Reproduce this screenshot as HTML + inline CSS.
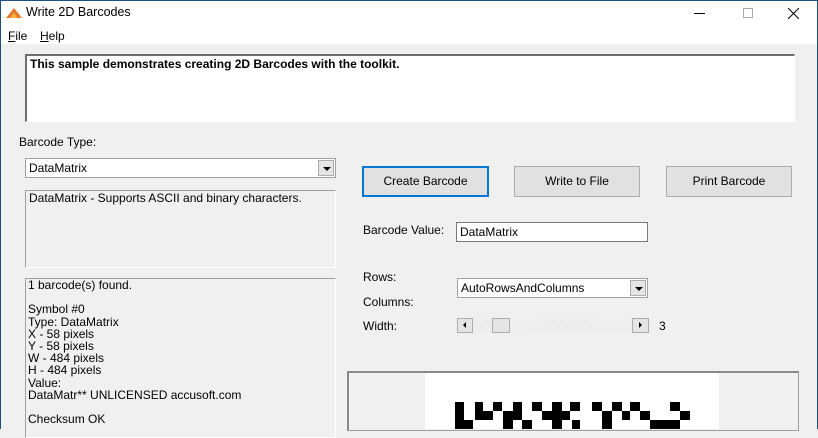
<!DOCTYPE html>
<html><head><style>
*{box-sizing:border-box;margin:0;padding:0}
body{width:818px;height:429px;overflow:hidden;background:#f0f0f0;font-family:"Liberation Sans",Arial,sans-serif;font-size:12px;color:#000;position:relative}
.a{position:absolute}
.win{left:0;top:0;width:818px;height:429px;border:1px solid #1c4f7c;border-bottom:none}
.title{left:1px;top:1px;width:816px;height:30px;background:#fff}
.menu{left:1px;top:30px;width:816px;height:14px;background:#fff}
.sunk{border-top:1px solid #a0a0a0;border-left:1px solid #a0a0a0;border-right:1px solid #fff;border-bottom:1px solid #fff}
.btn{background:#e1e1e1;border:1px solid #adadad;text-align:center;line-height:29px}
.combo{background:#fff;border:1px solid #a0a0a0;height:20px;line-height:18px;padding-left:3px}
.arr{position:absolute;right:1px;top:1px;width:16px;height:16px;background:#e5e5e5;border:1px solid #adadad}
.arr:after{content:"";position:absolute;left:4px;top:6px;border-left:4px solid transparent;border-right:4px solid transparent;border-top:4px solid #000}
.k{position:absolute;background:#000}
</style></head><body>
<div class="a win"></div>
<div class="a title"></div>
<svg class="a" style="left:6px;top:7px" width="16" height="12"><polygon points="0,11 8,1 16,11 11,11 8,6 4,11" fill="#e8782a"/><polygon points="4,11 8,6 11,11" fill="#f4b23a"/></svg>
<div class="a" style="left:26px;top:5px;font-size:12.5px">Write 2D Barcodes</div>
<div class="a" style="left:694px;top:13px;width:11px;height:1px;background:#000"></div>
<div class="a" style="left:743px;top:8px;width:10px;height:10px;border:1px solid #aaa"></div>
<svg class="a" style="left:788px;top:8px" width="11" height="11"><path d="M0 0L11 11M11 0L0 11" stroke="#000" stroke-width="1"/></svg>
<div class="a menu"></div>
<div class="a" style="left:8px;top:29px"><u>F</u>ile</div>
<div class="a" style="left:40px;top:29px"><u>H</u>elp</div>

<div class="a sunk" style="left:25px;top:54px;width:770px;height:68px;background:#fff;border-top:2px solid #6d6d6d;border-left:2px solid #6d6d6d"></div>
<div class="a" style="left:30px;top:57px;font-weight:bold">This sample demonstrates creating 2D Barcodes with the toolkit.</div>

<div class="a" style="left:19px;top:135px">Barcode Type:</div>
<div class="a combo" style="left:25px;top:158px;width:311px">DataMatrix<div class="arr"></div></div>

<div class="a sunk" style="left:25px;top:190px;width:311px;height:78px"></div>
<div class="a" style="left:29px;top:191px">DataMatrix - Supports ASCII and binary characters.</div>

<div class="a sunk" style="left:25px;top:278px;width:311px;height:160px"></div>
<div class="a" style="left:28px;top:279px;line-height:12.2px">1 barcode(s) found.<br><br>Symbol #0<br>Type: DataMatrix<br>X - 58 pixels<br>Y - 58 pixels<br>W - 484 pixels<br>H - 484 pixels<br>Value:<br>DataMatr** UNLICENSED accusoft.com<br><br>Checksum OK</div>

<div class="a btn" style="left:362px;top:166px;width:127px;height:31px;border:2px solid #0078d7;line-height:27px">Create Barcode</div>
<div class="a btn" style="left:514px;top:166px;width:126px;height:31px">Write to File</div>
<div class="a btn" style="left:666px;top:166px;width:126px;height:31px">Print Barcode</div>

<div class="a" style="left:363px;top:223px">Barcode Value:</div>
<div class="a combo" style="left:456px;top:222px;width:192px;border-color:#7a7a7a">DataMatrix</div>

<div class="a" style="left:363px;top:270px">Rows:</div>
<div class="a" style="left:363px;top:295px">Columns:</div>
<div class="a combo" style="left:457px;top:278px;width:191px">AutoRowsAndColumns<div class="arr"></div></div>
<div class="a" style="left:363px;top:319px">Width:</div>
<div class="a" style="left:457px;top:318px;width:192px;height:15px;background:repeating-linear-gradient(45deg,#e8e8e8 0 1px,#f4f4f4 1px 2px)"></div>
<div class="a" style="left:457px;top:318px;width:16px;height:15px;background:#e5e5e5;border:1px solid #adadad"></div>
<div class="a" style="left:463px;top:322px;border-top:3px solid transparent;border-bottom:3px solid transparent;border-right:3px solid #000"></div>
<div class="a" style="left:492px;top:318px;width:18px;height:15px;background:#e5e5e5;border:1px solid #adadad"></div>
<div class="a" style="left:632px;top:318px;width:17px;height:15px;background:#e5e5e5;border:1px solid #adadad"></div>
<div class="a" style="left:639px;top:322px;border-top:3px solid transparent;border-bottom:3px solid transparent;border-left:3px solid #000"></div>
<div class="a" style="left:659px;top:319px">3</div>

<div class="a" style="left:347px;top:371px;width:452px;height:60px;border:1px solid #a0a0a0;border-top:2px solid #8a8a8a;border-left:2px solid #8a8a8a"></div>
<div class="a" style="left:425px;top:373px;width:294px;height:56px;background:#fff"></div>
<!-- barcode -->
<div class="k" style="left:455px;top:402px;width:9px;height:27px"></div>
<div class="k" style="left:455px;top:420px;width:18px;height:9px"></div>
<div class="k" style="left:475px;top:402px;width:8px;height:18px"></div>
<div class="k" style="left:483px;top:411px;width:10px;height:9px"></div>
<div class="k" style="left:493px;top:402px;width:9px;height:9px"></div>
<div class="k" style="left:513px;top:402px;width:9px;height:18px"></div>
<div class="k" style="left:503px;top:411px;width:10px;height:18px"></div>
<div class="k" style="left:522px;top:420px;width:10px;height:9px"></div>
<div class="k" style="left:532px;top:402px;width:10px;height:9px"></div>
<div class="k" style="left:542px;top:411px;width:28px;height:9px"></div>
<div class="k" style="left:552px;top:402px;width:10px;height:27px"></div>
<div class="k" style="left:570px;top:402px;width:10px;height:9px"></div>
<div class="k" style="left:572px;top:420px;width:8px;height:9px"></div>
<div class="k" style="left:592px;top:402px;width:10px;height:9px"></div>
<div class="k" style="left:602px;top:411px;width:10px;height:18px"></div>
<div class="k" style="left:612px;top:402px;width:10px;height:9px"></div>
<div class="k" style="left:622px;top:411px;width:8px;height:9px"></div>
<div class="k" style="left:630px;top:402px;width:10px;height:9px"></div>
<div class="k" style="left:640px;top:411px;width:10px;height:9px"></div>
<div class="k" style="left:650px;top:420px;width:30px;height:9px"></div>
<div class="k" style="left:670px;top:402px;width:10px;height:9px"></div>
<div class="k" style="left:680px;top:411px;width:10px;height:9px"></div>
</body></html>
